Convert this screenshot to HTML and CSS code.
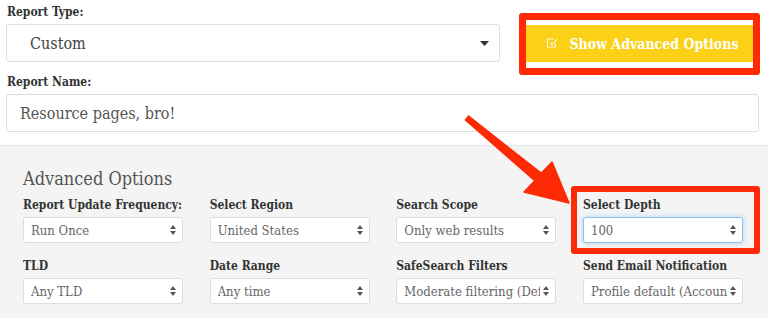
FILE: index.html
```html
<!DOCTYPE html>
<html lang="en">
<head>
<meta charset="UTF-8">
<meta name="viewport" content="width=device-width, initial-scale=1.0">
<title>Report Settings</title>
<link rel="stylesheet" href="styles.css">
</head>
<body>

<div class="top">
    <div class="top-row">
        <div class="field type-field">
            <label class="label">Report Type:</label>
            <div class="select big">
                <span class="value">Custom</span>
                <svg class="caret" width="9" height="5" viewBox="0 0 9 5"><path d="M0 0h9L4.5 5z" fill="#333"/></svg>
            </div>
        </div>
        <div class="btn-wrap">
            <button class="adv-button">
                <svg class="check" width="11" height="11" viewBox="0 0 11 11" fill="none" stroke="#fff" stroke-width="1.2" opacity="0.85">
                    <path d="M8.5 5.5v3.5h-8v-8h6"/>
                    <path d="M2.8 4.6l2 2L10 1.4"/>
                </svg>
                Show Advanced Options
            </button>
            <span class="mark mark-button"></span>
        </div>
    </div>
    <div class="field">
        <label class="label">Report Name:</label>
        <div class="input">Resource pages, bro!</div>
    </div>
</div>

<div class="advanced">
    <h3 class="adv-title">Advanced Options</h3>
    <div class="adv-grid">
        <div class="field">
            <label class="label">Report Update Frequency:</label>
            <div class="select small"><span class="value">Run Once</span><span class="updown"></span></div>
        </div>
        <div class="field">
            <label class="label">Select Region</label>
            <div class="select small"><span class="value">United States</span><span class="updown"></span></div>
        </div>
        <div class="field">
            <label class="label">Search Scope</label>
            <div class="select small"><span class="value">Only web results</span><span class="updown"></span></div>
        </div>
        <div class="field depth-field">
            <label class="label">Select Depth</label>
            <div class="select small focused"><span class="value">100</span><span class="updown"></span></div>
            <span class="mark mark-depth"></span>
        </div>
        <div class="field">
            <label class="label">TLD</label>
            <div class="select small"><span class="value">Any TLD</span><span class="updown"></span></div>
        </div>
        <div class="field">
            <label class="label">Date Range</label>
            <div class="select small"><span class="value">Any time</span><span class="updown"></span></div>
        </div>
        <div class="field">
            <label class="label">SafeSearch Filters</label>
            <div class="select small"><span class="value">Moderate filtering (Default)</span><span class="updown"></span></div>
        </div>
        <div class="field">
            <label class="label">Send Email Notification</label>
            <div class="select small"><span class="value">Profile default (Account setting)</span><span class="updown"></span></div>
        </div>
    </div>
</div>

<svg class="arrow" width="768" height="319" viewBox="0 0 768 319">
    <path d="M468.6 116.1L541.2 173.2L552 162L569 203L524 192L534.8 180.8L465.4 119.9Z" fill="#fd2a05" stroke="#fd2a05" stroke-width="1.5" stroke-linejoin="round"/>
</svg>

</body>
</html>
```

FILE: styles.css
```css
body {
    margin: 0;
    font-family: "DejaVu Serif Condensed", "DejaVu Serif", serif;
    color: #333;
    background: #fff;
    position: relative;
    width: 768px;
    height: 319px;
    overflow: hidden;
}

.top {
    padding: 4px 9px 13px 6px;
}

.top-row {
    display: flex;
    gap: 26px;
    margin-bottom: 12px;
}

.type-field {
    width: 494px;
}

.label {
    display: block;
    font-size: 12px;
    font-weight: bold;
    line-height: 17px;
    margin: 0 0 3px 1px;
    color: #333;
}

.select {
    display: flex;
    align-items: center;
    background: #fff;
    border: 1px solid #ddd;
    border-radius: 3px;
    box-sizing: border-box;
    position: relative;
    overflow: hidden;
}

.select .value {
    flex: 1;
    white-space: nowrap;
    overflow: hidden;
}

.select.big {
    height: 38px;
    padding: 0 10px 0 23px;
    font-size: 16px;
    color: #444;
}

.caret {
    margin-left: 10px;
}

.btn-wrap {
    position: relative;
    margin-top: 21px;
    width: 228px;
    height: 37px;
}

.adv-button {
    width: 100%;
    height: 100%;
    border: none;
    background-color: #fbd016;
    color: #fff;
    font-family: "DejaVu Serif Condensed", "DejaVu Serif", serif;
    font-size: 14px;
    font-weight: bold;
    display: flex;
    align-items: center;
    justify-content: center;
    gap: 11px;
    padding: 0 0 0 6px;
    cursor: pointer;
}

.mark {
    position: absolute;
    border: 7px solid #fd2a05;
    border-radius: 3px;
    pointer-events: none;
}

.mark-button {
    left: -7px;
    right: -6px;
    top: -12px;
    bottom: -13px;
}

.input {
    height: 38px;
    border: 1px solid #ddd;
    border-radius: 3px;
    box-sizing: border-box;
    display: flex;
    align-items: center;
    padding-left: 13px;
    font-size: 16px;
    color: #555;
}

.advanced {
    background-color: #f4f4f4;
    border-top: 1px solid #e9e9e9;
    padding: 22px 0 0 23px;
    height: 150px;
}

.adv-title {
    margin: 0 0 7px;
    font-size: 18px;
    font-weight: normal;
    line-height: 22px;
    color: #555;
}

.adv-grid {
    display: grid;
    grid-template-columns: repeat(4, 160px);
    column-gap: 26.67px;
    row-gap: 15px;
}

.adv-grid .label {
    margin-left: 0;
    margin-bottom: 3px;
    white-space: nowrap;
}

.select.small {
    height: 26px;
    padding: 0 6px 0 7px;
    font-size: 13px;
    color: #666;
}

.updown {
    width: 6px;
    height: 10px;
    margin-left: 3px;
    position: relative;
}

.updown::before,
.updown::after {
    content: "";
    position: absolute;
    left: 0;
    border-left: 3px solid transparent;
    border-right: 3px solid transparent;
}

.updown::before {
    top: 0;
    border-bottom: 4px solid #555;
}

.updown::after {
    bottom: 0;
    border-top: 4px solid #555;
}

.select.focused {
    border-color: #8cbfea;
    box-shadow: 0 0 5px rgba(102, 175, 233, 0.5);
    overflow: visible;
}

.depth-field {
    position: relative;
}

.mark-depth {
    left: -12px;
    right: -17px;
    top: -11px;
    bottom: -11px;
    border-width: 6px;
}

.arrow {
    position: absolute;
    top: 0;
    left: 0;
    pointer-events: none;
}
```
